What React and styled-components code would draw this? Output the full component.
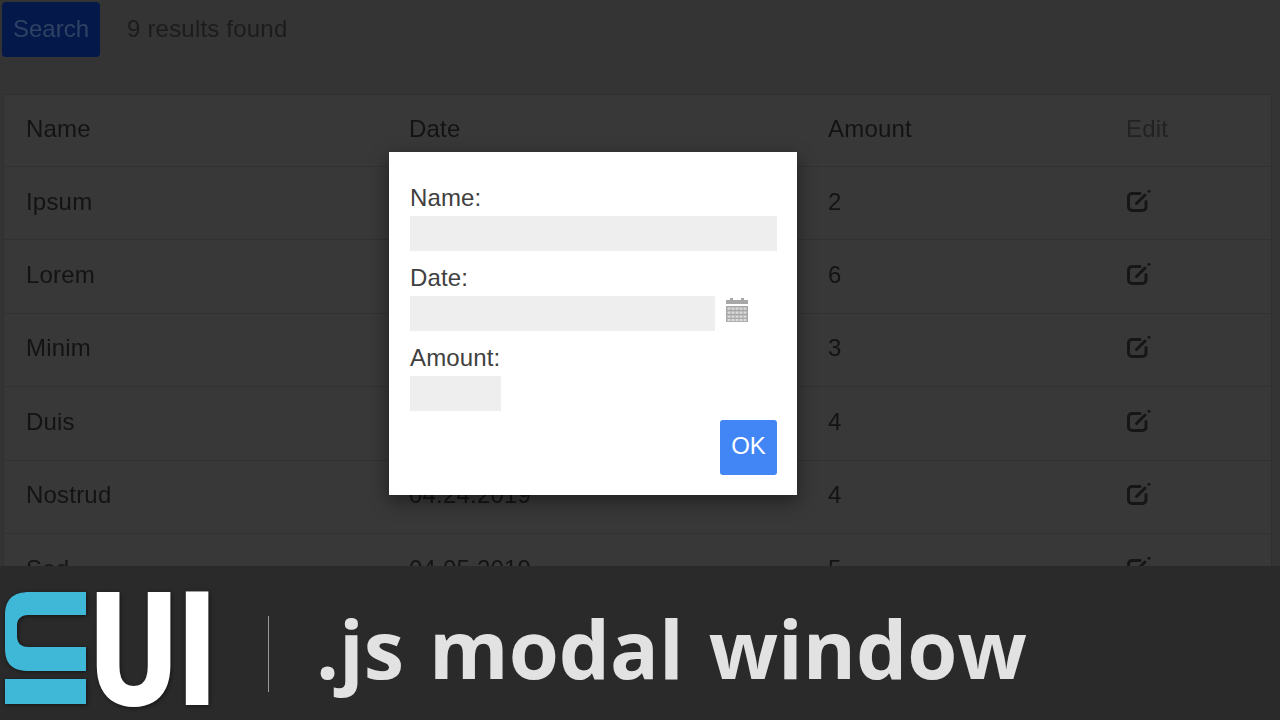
import React from 'react';
import styled, { createGlobalStyle } from 'styled-components';

const GlobalStyle = createGlobalStyle`
    html, body {
        margin: 0;
        height: 100%;
        overflow: hidden;
        background: #343434;
        font-family: "Liberation Sans", Arial, sans-serif;
    }
`;

const Screen = styled.div`
    position: relative;
    width: 1280px;
    height: 720px;
    overflow: hidden;
    background: #343434;
`;

const Page = styled.div`
    padding: 2px 8px 0 3px;
    color: #131313;
    font-size: 24px;
    letter-spacing: 0.2px;
    filter: blur(0.7px);
`;

const Toolbar = styled.div`
    display: flex;
    align-items: center;
    gap: 27px;
    height: 55px;
    margin-bottom: 37px;
`;

const SearchButton = styled.button`
    width: 98px;
    height: 55px;
    margin-left: -1px;
    padding: 0 0 2px;
    border: 0;
    border-radius: 4px;
    background: #04194a;
    color: #2f4263;
    font: inherit;
`;

const ResultCount = styled.span`
    margin-bottom: 2px;
    color: #1c1c1c;
`;

const Table = styled.div`
    border: 1px solid #2f2f2f;
    border-bottom: 0;
    background: #383838;
`;

const Row = styled.div`
    display: grid;
    grid-template-columns: 383px 419px 298px 1fr;
    align-items: center;
    height: ${(p) => (p.$head ? 72 : 73.4)}px;
    padding-bottom: 3px;
    box-sizing: border-box;
    border-bottom: 1px solid #313131;
`;

const Cell = styled.div`
    padding-left: 22px;
    color: ${(p) => (p.$muted ? '#222' : 'inherit')};
`;

const EditGlyph = styled.svg`
    display: block;
    width: 26px;
    height: 26px;
    margin-top: -2px;
    fill: none;
    stroke: #161616;
    stroke-width: 3;
    stroke-linecap: round;
    stroke-linejoin: round;
`;

const Overlay = styled.div`
    position: absolute;
    top: 152px;
    left: 389px;
`;

const Modal = styled.div`
    width: 408px;
    height: 343px;
    box-sizing: border-box;
    padding: 31px 20px 20px 21px;
    background: #fff;
    box-shadow: 0 6px 18px rgba(0, 0, 0, 0.45);
    color: #404040;
    font-size: 24px;
    letter-spacing: 0.15px;
`;

const Label = styled.div`
    height: 28px;
    line-height: 29px;
    margin-bottom: 5px;
`;

const Field = styled.div`
    display: flex;
    align-items: flex-start;
    gap: 10px;
    height: 35px;
    margin-bottom: 12px;
`;

const Input = styled.div`
    width: ${(p) => p.$width}px;
    height: 35px;
    background: #eeeeee;
`;

const CalendarGlyph = styled.svg`
    display: block;
    width: 24px;
    height: 26px;
    margin-top: 1px;
`;

const Actions = styled.div`
    display: flex;
    justify-content: flex-end;
    margin-top: -3px;
`;

const OkButton = styled.button`
    width: 57px;
    height: 55px;
    border: 0;
    border-radius: 3px;
    background: #4285f4;
    color: #fff;
    font: inherit;
    padding: 0 0 3px;
`;

const Banner = styled.div`
    position: absolute;
    left: 0;
    right: 0;
    bottom: 0;
    height: 154px;
    display: flex;
    align-items: center;
    background: #2a2a2a;
`;

const Logo = styled.svg`
    display: block;
    width: 268px;
    height: 154px;
    flex-shrink: 0;
    filter: drop-shadow(1px 1px 2px rgba(0, 0, 0, 0.5));
`;

const LogoText = styled.text`
    fill: #fff;
    font-family: Roboto, sans-serif;
    font-weight: 900;
    font-size: 160px;
`;

const Divider = styled.div`
    width: 1px;
    height: 76px;
    margin-top: 22px;
    background: #9a9a9a;
    flex-shrink: 0;
`;

const Title = styled.h1`
    margin: 8px 0 0 47px;
    color: #e2e2e2;
    font-family: "Open Sans", sans-serif;
    font-weight: 700;
    font-size: 81px;
    line-height: 1;
    word-spacing: 4px;
    white-space: nowrap;
`;

const rows = [
    ['Ipsum', '', '2'],
    ['Lorem', '', '6'],
    ['Minim', '', '3'],
    ['Duis', '', '4'],
    ['Nostrud', '04.24.2019', '4'],
    ['Sed', '04.05.2019', '5'],
];

const EditIcon = () => (
    <EditGlyph viewBox="0 0 26 26">
        <path d="M20 13.5V19a3.5 3.5 0 0 1-3.5 3.5H6A3.5 3.5 0 0 1 2.5 19V9A3.5 3.5 0 0 1 6 5.5h8" />
        <path d="M10.5 15.5 19 7" />
        <path d="M23 3.2h.01" />
    </EditGlyph>
);

const CalendarIcon = () => (
    <CalendarGlyph viewBox="0 0 24 26">
        <path fill="#a8a8a8" d="M1 3h4V1h3v2h8V1h3v2h4v4H1z" />
        <rect x="1" y="9" width="22" height="16" fill="#a8a8a8" />
        {[10.5, 14.5, 18.5, 22].map((y) =>
            [2.5, 6.5, 10.5, 14.5, 18.5].map((x) => (
                <rect key={`${x}-${y}`} x={x} y={y} width="3" height="2.2" fill="#dcdcdc" />
            ))
        )}
    </CalendarGlyph>
);

const App = () => {
    return (
        <Screen>
            <GlobalStyle />
            <Page>
                <Toolbar>
                    <SearchButton>Search</SearchButton>
                    <ResultCount>9 results found</ResultCount>
                </Toolbar>
                <Table>
                    <Row $head>
                        <Cell>Name</Cell>
                        <Cell>Date</Cell>
                        <Cell>Amount</Cell>
                        <Cell $muted>Edit</Cell>
                    </Row>
                    {rows.map((row) => (
                        <Row key={row[0]}>
                            <Cell>{row[0]}</Cell>
                            <Cell>{row[1]}</Cell>
                            <Cell>{row[2]}</Cell>
                            <Cell>
                                <EditIcon />
                            </Cell>
                        </Row>
                    ))}
                </Table>
            </Page>
            <Overlay>
                <Modal>
                    <Label>Name:</Label>
                    <Field>
                        <Input $width={367} />
                    </Field>
                    <Label>Date:</Label>
                    <Field>
                        <Input $width={305} />
                        <CalendarIcon />
                    </Field>
                    <Label>Amount:</Label>
                    <Field>
                        <Input $width={91} />
                    </Field>
                    <Actions>
                        <OkButton>OK</OkButton>
                    </Actions>
                </Modal>
            </Overlay>
            <Banner>
                <Logo viewBox="0 0 268 154">
                    <path
                        fill="#3fb8d8"
                        d="M86 26H30C12 26 5 34 5 50v32c0 16 7 23 25 23h56V81H28c-7 0-11-4-11-11V60c0-7 4-11 11-11h58z"
                    />
                    <rect x="5" y="113" width="81" height="25" fill="#3fb8d8" />
                    <LogoText x="90" y="139" textLength="127" lengthAdjust="spacingAndGlyphs">
                        UI
                    </LogoText>
                </Logo>
                <Divider />
                <Title>.js modal window</Title>
            </Banner>
        </Screen>
    );
};

export default App;
